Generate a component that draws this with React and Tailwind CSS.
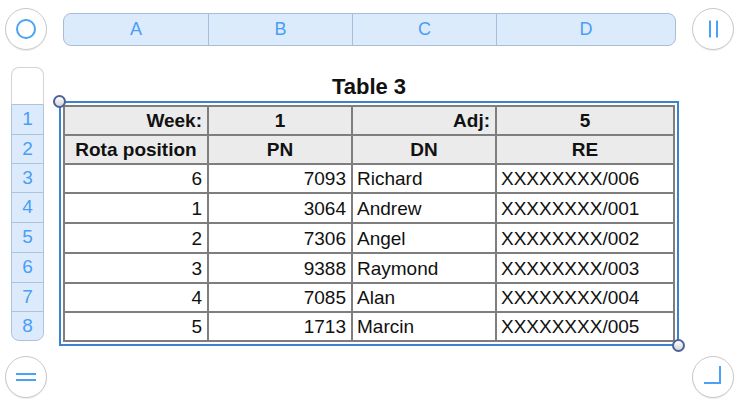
const columns = [
  { label: "A", width: "w-[145px] border-r" },
  { label: "B", width: "w-[144px] border-r" },
  { label: "C", width: "w-[144px] border-r" },
  { label: "D", width: "flex-1" },
];

const rowHeaders = [
  "h-[30px] border-b",
  "h-[29px] border-b",
  "h-[29px] border-b",
  "h-[30px] border-b",
  "h-[30px] border-b",
  "h-[30px] border-b",
  "h-[29px] border-b",
  "h-[28px]",
];

const people = [
  { rota: 6, pn: 7093, dn: "Richard", re: "XXXXXXXX/006" },
  { rota: 1, pn: 3064, dn: "Andrew", re: "XXXXXXXX/001" },
  { rota: 2, pn: 7306, dn: "Angel", re: "XXXXXXXX/002" },
  { rota: 3, pn: 9388, dn: "Raymond", re: "XXXXXXXX/003" },
  { rota: 4, pn: 7085, dn: "Alan", re: "XXXXXXXX/004" },
  { rota: 5, pn: 1713, dn: "Marcin", re: "XXXXXXXX/005" },
];

const RoundButton = ({ children }) => (
  <button className="grid size-[42px] shrink-0 place-items-center rounded-full border border-[#c9c9c9] bg-white shadow-[0_1px_1px_rgba(0,0,0,0.08)]">
    <svg aria-hidden="true" className="size-[24px]" viewBox="0 0 24 24">
      {children}
    </svg>
  </button>
);

const Handle = ({ className }) => (
  <span
    className={`absolute size-[13px] rounded-full border-2 border-[#4a6398] bg-gradient-to-b from-white to-[#d6d6d6] ${className}`}
  />
);

const Cell = ({ children, className = "" }) => (
  <div className={`flex items-center overflow-hidden whitespace-nowrap leading-[27px] ${className}`}>
    {children}
  </div>
);

const App = () => {
  return (
    <div className="h-[410px] w-[754px] overflow-hidden bg-white font-['Liberation_Sans',Arial,sans-serif] text-[#111]">
      <div className="flex items-center pt-[8px] pl-[5px]">
        <RoundButton>
          <circle cx="12" cy="12" fill="none" r="9" stroke="#4aa2f6" strokeWidth="2" />
        </RoundButton>

        <div className="ml-[16px] flex h-[33px] w-[613px] overflow-hidden rounded-[8px] border border-[#a8bdd7] bg-[#dcebfc]">
          {columns.map((col) => (
            <div
              className={`flex items-center justify-center border-[#a8bdd7] text-[18px] text-[#4a9ef5] ${col.width}`}
              key={col.label}
            >
              {col.label}
            </div>
          ))}
        </div>

        <div className="ml-[16px]">
          <RoundButton>
            <rect fill="#4aa2f6" height="17" width="2" x="8" y="3.5" />
            <rect fill="#4aa2f6" height="17" width="2" x="15" y="3.5" />
          </RoundButton>
        </div>
      </div>

      <div className="mt-[17px] flex items-start pl-[11px]">
        <div className="flex w-[33px] flex-col">
          <div className="h-[37px] rounded-t-[8px] border border-b-0 border-[#d4d4d4] bg-white" />
          <div className="overflow-hidden rounded-b-[8px] border border-[#adc2dc] bg-[#dcebfc]">
            {rowHeaders.map((h, index) => (
              <div
                className={`flex items-center justify-center border-[#adc2dc] text-[19px] text-[#4a9ef5] ${h}`}
                key={index}
              >
                {index + 1}
              </div>
            ))}
          </div>
        </div>

        <div className="ml-[15px] flex w-[620px] flex-col">
          <div className="h-[34px] pt-[7px] text-center text-[22px] font-bold leading-[25px]">
            Table 3
          </div>

          <div className="relative border-2 border-[#3b82d0] p-[2px]">
            <Handle className="-left-[8px] -top-[8px]" />
            <Handle className="-bottom-[8px] -right-[8px]" />

            <div className="grid grid-cols-[142px_142px_142px_176px] grid-rows-[27px_27px_27px_28px_28px_28px_27px_27px] gap-[2px] bg-[#7e7e7e] p-[2px] text-[19px]">
              <Cell className="justify-end bg-[#ebebeb] pr-[5px] font-bold">Week:</Cell>
              <Cell className="justify-center bg-[#ebebeb] font-bold">1</Cell>
              <Cell className="justify-end bg-[#ebebeb] pr-[5px] font-bold">Adj:</Cell>
              <Cell className="justify-center bg-[#ebebeb] font-bold">5</Cell>

              <Cell className="justify-center bg-[#ebebeb] font-bold">Rota position</Cell>
              <Cell className="justify-center bg-[#ebebeb] font-bold">PN</Cell>
              <Cell className="justify-center bg-[#ebebeb] font-bold">DN</Cell>
              <Cell className="justify-center bg-[#ebebeb] font-bold">RE</Cell>

              {people.map((p) => [
                <Cell className="justify-end bg-white pr-[5px]" key={`${p.pn}-r`}>
                  {p.rota}
                </Cell>,
                <Cell className="justify-end bg-white pr-[5px]" key={`${p.pn}-p`}>
                  {p.pn}
                </Cell>,
                <Cell className="bg-white pl-[4px]" key={`${p.pn}-d`}>
                  {p.dn}
                </Cell>,
                <Cell className="bg-white pl-[4px]" key={`${p.pn}-e`}>
                  {p.re}
                </Cell>,
              ])}
            </div>
          </div>
        </div>
      </div>

      <div className="mt-[10px] flex w-[734px] justify-between pl-[5px]">
        <RoundButton>
          <rect fill="#4aa2f6" height="2" width="20" x="2" y="8" />
          <rect fill="#4aa2f6" height="2" width="20" x="2" y="14" />
        </RoundButton>
        <RoundButton>
          <rect fill="#4aa2f6" height="18" width="2" x="18" y="1" />
          <rect fill="#4aa2f6" height="2" width="17" x="3" y="17" />
        </RoundButton>
      </div>
    </div>
  );
};

export default App;
